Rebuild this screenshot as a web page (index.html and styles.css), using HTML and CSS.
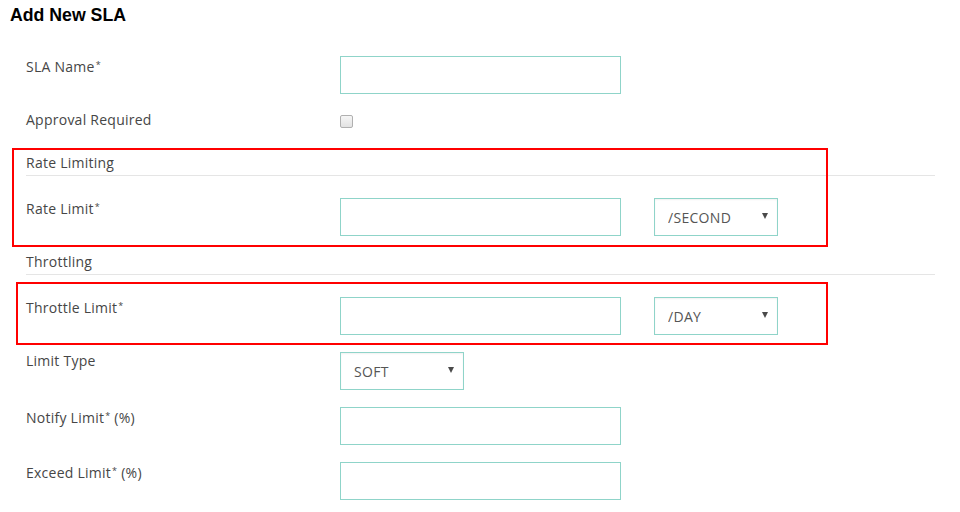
FILE: index.html
```html
<!DOCTYPE html>
<html lang="en">
<head>
    <meta charset="UTF-8">
    <title>Add New SLA</title>
    <link rel="stylesheet" href="styles.css">
</head>
<body>
    <div class="page">
        <h1 class="page-title">Add New SLA</h1>
        <form class="sla-form">
            <div class="form-row">
                <label class="form-label">SLA Name<span class="req">*</span></label>
                <div class="form-control"><input type="text" class="text-input"></div>
            </div>
            <div class="form-row check-row">
                <label class="form-label">Approval Required</label>
                <div class="form-control"><input type="checkbox" class="check-input"></div>
            </div>

            <div class="section-heading">Rate Limiting</div>
            <div class="form-row">
                <label class="form-label">Rate Limit<span class="req">*</span></label>
                <div class="form-control"><input type="text" class="text-input"></div>
                <div class="form-control">
                    <span class="select-wrap">
                        <select class="select-input">
                            <option>/SECOND</option>
                            <option>/MINUTE</option>
                            <option>/HOUR</option>
                        </select>
                    </span>
                </div>
            </div>

            <div class="section-heading">Throttling</div>
            <div class="form-row">
                <label class="form-label">Throttle Limit<span class="req">*</span></label>
                <div class="form-control"><input type="text" class="text-input"></div>
                <div class="form-control">
                    <span class="select-wrap">
                        <select class="select-input">
                            <option>/DAY</option>
                            <option>/WEEK</option>
                            <option>/MONTH</option>
                        </select>
                    </span>
                </div>
            </div>
            <div class="form-row">
                <label class="form-label">Limit Type</label>
                <div class="form-control">
                    <span class="select-wrap">
                        <select class="select-input">
                            <option>SOFT</option>
                            <option>HARD</option>
                        </select>
                    </span>
                </div>
            </div>
            <div class="form-row">
                <label class="form-label">Notify Limit<span class="req">*</span> (%)</label>
                <div class="form-control"><input type="text" class="text-input"></div>
            </div>
            <div class="form-row">
                <label class="form-label">Exceed Limit<span class="req">*</span> (%)</label>
                <div class="form-control"><input type="text" class="text-input"></div>
            </div>

            <!-- review markers drawn over the form -->
            <div class="highlight highlight-rate"></div>
            <div class="highlight highlight-throttle"></div>
        </form>
    </div>
</body>
</html>
```

FILE: styles.css
```css
body {
    margin: 0;
    background: #fff;
    font-family: "Open Sans", Arial, sans-serif;
    color: #464646;
    letter-spacing: 0.25px;
}
.page {
    padding: 4px 25px 0 10px;
}
.page-title {
    margin: 0;
    font-family: "Liberation Sans", Arial, sans-serif;
    font-size: 17.7px;
    line-height: 22px;
    font-weight: bold;
    letter-spacing: 0;
    color: #000;
}
.sla-form {
    position: relative;
    margin: 30px 0 0 16px;
}
.form-row {
    display: flex;
    height: 38px;
    margin-bottom: 17px;
}
.form-row.check-row {
    height: 26px;
}
.form-label {
    width: 314px;
    flex: none;
    font-size: 14px;
    line-height: 17px;
}
.req {
    font-size: 9px;
    vertical-align: 4px;
    margin-left: 1px;
}
.form-control {
    width: 314px;
    flex: none;
}
.text-input {
    box-sizing: border-box;
    width: 281px;
    height: 38px;
    margin: 0;
    border: 1px solid #8fd4c9;
    border-radius: 0;
    outline: none;
    background: #fff;
}
.check-input {
    -webkit-appearance: none;
    appearance: none;
    display: block;
    width: 13px;
    height: 13px;
    margin: 4px 0 0;
    border: 1px solid #b0b0b0;
    border-radius: 2px;
    background: linear-gradient(#f6f6f6, #e2e2e2);
}
.section-heading {
    font-size: 14px;
    line-height: 18px;
    padding-bottom: 3px;
    border-bottom: 1px solid #e5e5e5;
    margin-bottom: 22px;
}
.select-wrap {
    position: relative;
    display: inline-block;
}
.select-wrap::after {
    content: "";
    position: absolute;
    right: 10px;
    top: 15px;
    border-left: 3px solid transparent;
    border-right: 3px solid transparent;
    border-top: 6px solid #4a4a4a;
    pointer-events: none;
}
.select-input {
    -webkit-appearance: none;
    appearance: none;
    display: block;
    box-sizing: border-box;
    width: 124px;
    height: 38px;
    margin: 0;
    padding: 0 0 0 13px;
    border: 1px solid #8fd4c9;
    border-radius: 0;
    background: #fff;
    box-shadow: inset 0 1px 2px rgba(0, 0, 0, 0.06);
    font-family: "Open Sans", Arial, sans-serif;
    font-size: 14px;
    letter-spacing: 0.3px;
    color: #555;
    outline: none;
}
.highlight {
    position: absolute;
    border: 2px solid #ff0000;
    pointer-events: none;
}
.highlight-rate {
    left: -14px;
    top: 92px;
    width: 812px;
    height: 95px;
}
.highlight-throttle {
    left: -10px;
    top: 226px;
    width: 808px;
    height: 59px;
}
```
